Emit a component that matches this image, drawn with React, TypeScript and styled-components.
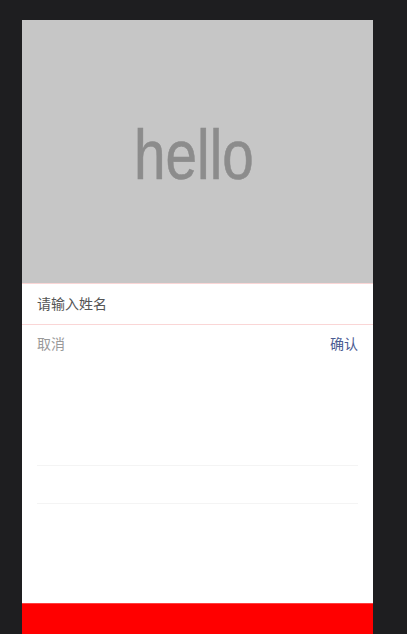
import React from 'react';
import { createGlobalStyle, styled } from 'styled-components';

const GlobalStyle = createGlobalStyle`
  html,
  body {
    margin: 0;
    padding: 0;
    height: 100%;
    background: #1e1e20;
    overflow: hidden;
  }

  body {
    font-family: 'Liberation Sans', 'Noto Sans CJK SC', sans-serif;
  }
`;

const Panel = styled.div`
  display: flex;
  flex-direction: column;
  width: 351px;
  margin: 20px 0 0 22px;
  background: #ffffff;
`;

const Banner = styled.div`
  display: flex;
  align-items: center;
  justify-content: center;
  height: 263px;
  background: #c6c6c6;
`;

const BannerText = styled.span`
  display: block;
  margin: 6px 8px 0 0;
  font-family: 'Liberation Sans', Arial, sans-serif;
  font-size: 70px;
  line-height: 1;
  color: #8c8c8c;
  transform: scaleX(0.81);
  -webkit-text-stroke: 0.6px #8c8c8c;
`;

const InputRow = styled.div`
  display: flex;
  align-items: center;
  height: 42px;
  padding: 0 15px 3px;
  box-sizing: border-box;
  border-top: 1px solid #fad6d6;
  border-bottom: 1px solid #fad6d6;
`;

const NameInput = styled.input`
  flex: 1;
  border: none;
  outline: none;
  padding: 0;
  background: transparent;
  font-family: 'Noto Sans CJK SC', sans-serif;
  font-size: 14px;
  color: #333;

  &::placeholder {
    color: #555;
  }
`;

const ActionBar = styled.div`
  display: flex;
  align-items: center;
  justify-content: space-between;
  height: 38px;
  padding: 0 15px 2px;
  box-sizing: border-box;
`;

const ActionButton = styled.button<{ $primary?: boolean }>`
  border: none;
  background: none;
  padding: 0;
  font-family: 'Noto Sans CJK SC', sans-serif;
  font-size: 14px;
  color: ${(p) => (p.$primary ? '#4a5c92' : '#999999')};
`;

const Picker = styled.div`
  display: flex;
  flex-direction: column;
  justify-content: center;
  height: 240px;
  padding: 0 15px;
`;

const PickerBand = styled.div`
  height: 37px;
  margin-top: 2px;
  border-top: 1px solid #f4f4f4;
  border-bottom: 1px solid #f4f4f4;
`;

const Footer = styled.div`
  height: 40px;
  background: #ff0000;
  border-top: 1px solid #ff4040;
`;

export default function App() {
  return (
    <>
      <GlobalStyle />
      <Panel>
        <Banner>
          <BannerText>hello</BannerText>
        </Banner>
        <InputRow>
          <NameInput placeholder='请输入姓名' />
        </InputRow>
        <ActionBar>
          <ActionButton>取消</ActionButton>
          <ActionButton $primary>确认</ActionButton>
        </ActionBar>
        <Picker>
          <PickerBand />
        </Picker>
        <Footer />
      </Panel>
    </>
  );
}
